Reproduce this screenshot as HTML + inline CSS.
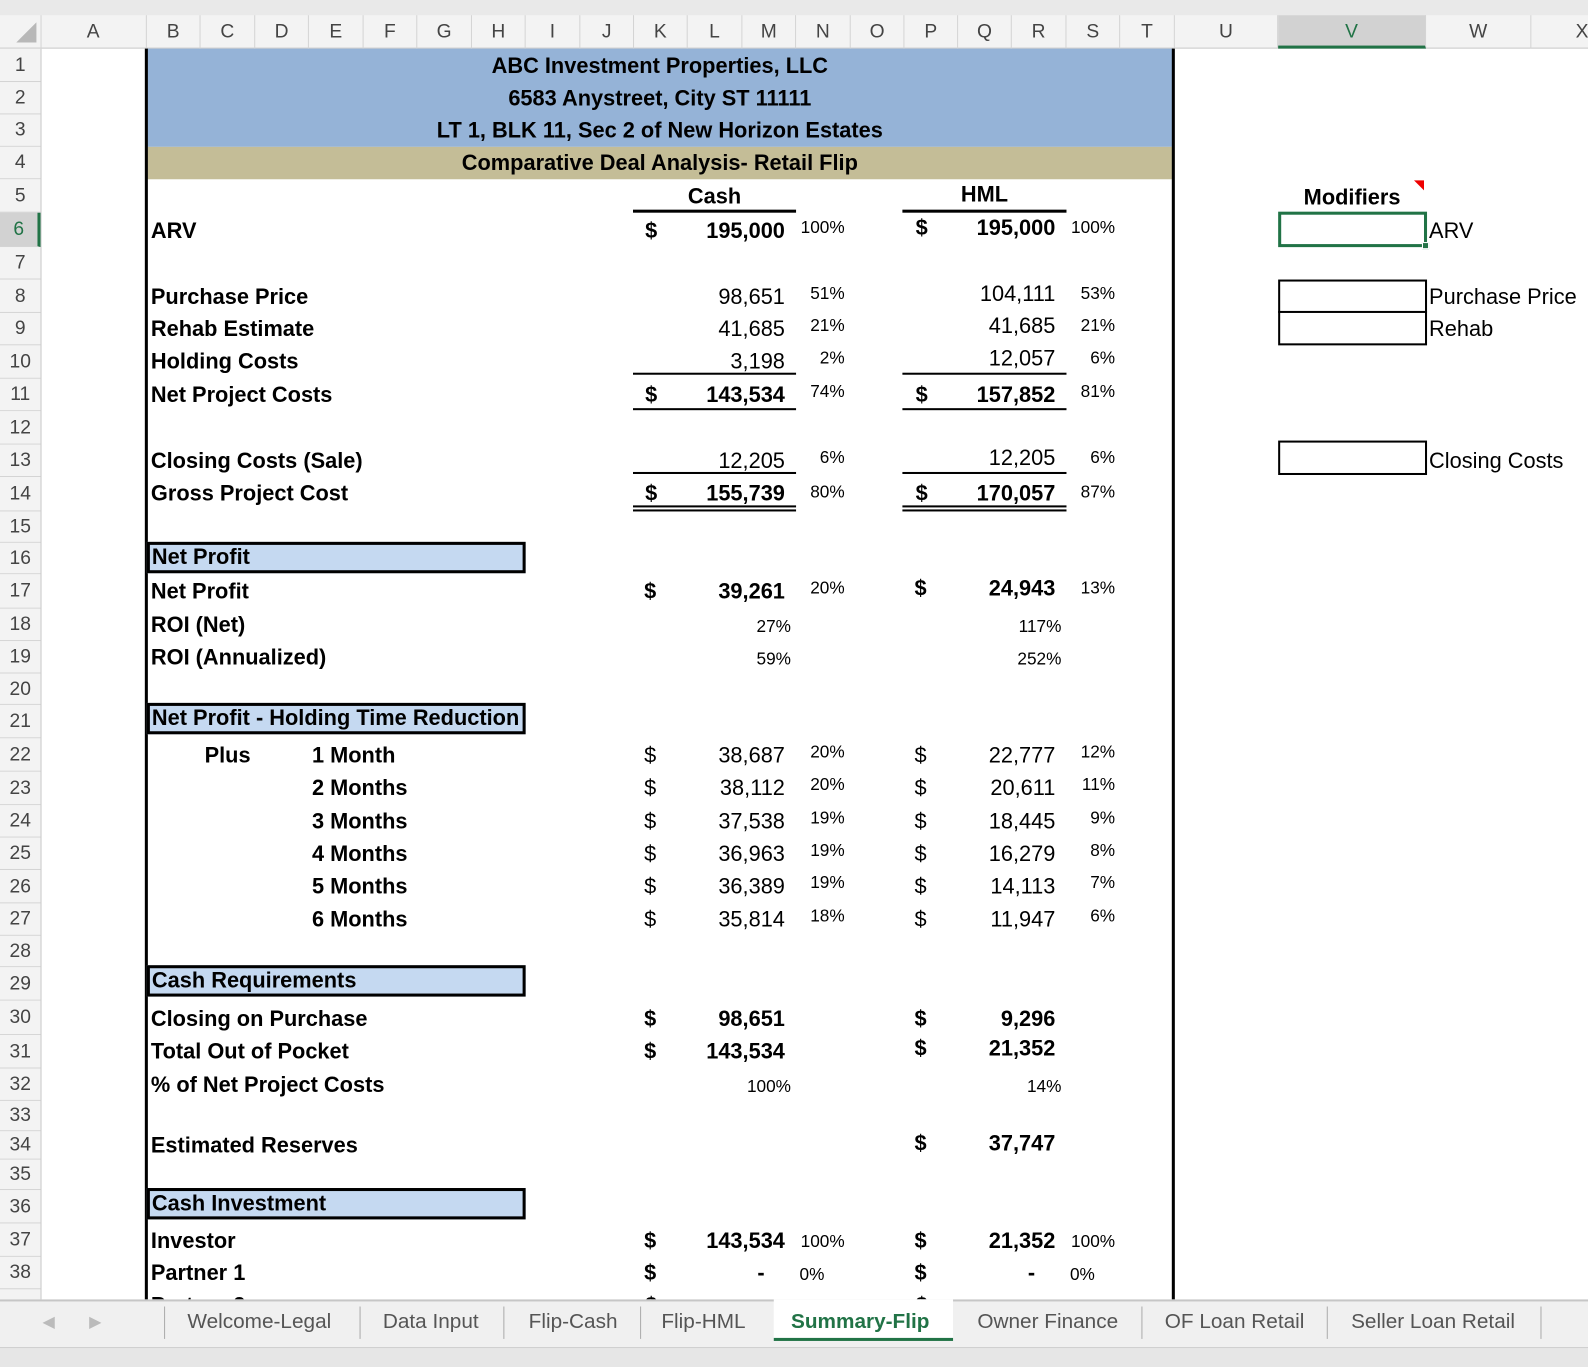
<!DOCTYPE html>
<html><head><meta charset="utf-8">
<style>
*{margin:0;padding:0;box-sizing:border-box}
body{width:1588px;height:1350px;position:relative;overflow:hidden;background:#fff;font-family:"Liberation Sans",Arial,sans-serif;color:#000}
#w{position:absolute;left:0;top:0;width:1568px;height:1334px;transform:scale(1.0128);transform-origin:0 0}
.a{position:absolute;white-space:nowrap}
.t{position:absolute;white-space:nowrap;font-size:21.5px;line-height:24px;height:24px}
.b{font-weight:bold}
.l{left:149px}
.r{text-align:right}
.p{font-size:17px}
.ch{position:absolute;top:15px;height:33px;line-height:33px;font-size:19px;color:#444;text-align:center;border-right:1px solid #d4d4d4}
.rh{position:absolute;left:0;width:40px;font-size:19px;color:#444;text-align:center;border-bottom:1px solid #d4d4d4;background:#f3f3f3}
.box{position:absolute;left:145px;width:374px;height:31px;background:#c5d9f1;border:3px solid #000;font-weight:bold;font-size:21.5px;line-height:25px;padding-left:2px}
.ul{position:absolute;height:2px;background:#000}
.tab{position:absolute;top:1292px;font-size:20.5px;color:#555;line-height:26px}
.sep{position:absolute;top:1290px;width:1px;height:32px;background:#aaa}
</style></head><body>
<div id="w">
<div class="a" style="left:0;top:0;width:1600px;height:48px;background:#f3f3f3;border-bottom:1px solid #c8c8c8"></div>
<div class="a" style="left:0;top:0;width:1600px;height:15px;background:#e9e9e9"></div>
<div class="a" style="left:40px;top:15px;width:0;height:33px;border-left:1px solid #d4d4d4"></div>
<svg class="a" style="left:16px;top:22px" width="20" height="20"><polygon points="20,0 20,20 0,20" fill="#b8b8b8"/></svg>
<div class="ch" style="left:40px;width:105px">A</div>
<div class="ch" style="left:145px;width:53px">B</div>
<div class="ch" style="left:198px;width:54px">C</div>
<div class="ch" style="left:252px;width:53px">D</div>
<div class="ch" style="left:305px;width:54px">E</div>
<div class="ch" style="left:359px;width:53px">F</div>
<div class="ch" style="left:412px;width:54px">G</div>
<div class="ch" style="left:466px;width:53px">H</div>
<div class="ch" style="left:519px;width:54px">I</div>
<div class="ch" style="left:573px;width:53px">J</div>
<div class="ch" style="left:626px;width:53px">K</div>
<div class="ch" style="left:679px;width:54px">L</div>
<div class="ch" style="left:733px;width:53px">M</div>
<div class="ch" style="left:786px;width:54px">N</div>
<div class="ch" style="left:840px;width:53px">O</div>
<div class="ch" style="left:893px;width:53px">P</div>
<div class="ch" style="left:946px;width:53px">Q</div>
<div class="ch" style="left:999px;width:54px">R</div>
<div class="ch" style="left:1053px;width:53px">S</div>
<div class="ch" style="left:1106px;width:54px">T</div>
<div class="ch" style="left:1160px;width:102px">U</div>
<div class="ch" style="left:1262px;width:146px;background:#d2d2d2;border-bottom:3px solid #217346;color:#217346">V</div>
<div class="ch" style="left:1408px;width:104px">W</div>
<div class="ch" style="left:1512px;width:100px;border:none">X</div>

<div class="a" style="left:0;top:48px;width:41px;height:1235px;background:#f3f3f3;border-right:1px solid #c8c8c8"></div>
<div class="rh" style="top:48px;height:33px;line-height:33px">1</div>
<div class="rh" style="top:81px;height:32px;line-height:32px">2</div>
<div class="rh" style="top:113px;height:32px;line-height:32px">3</div>
<div class="rh" style="top:145px;height:32px;line-height:32px">4</div>
<div class="rh" style="top:177px;height:33px;line-height:33px">5</div>
<div class="rh" style="top:210px;height:34px;line-height:34px;background:#d2d2d2;color:#217346;border-right:3px solid #217346">6</div>
<div class="rh" style="top:244px;height:32px;line-height:32px">7</div>
<div class="rh" style="top:276px;height:33px;line-height:33px">8</div>
<div class="rh" style="top:309px;height:32px;line-height:32px">9</div>
<div class="rh" style="top:341px;height:33px;line-height:33px">10</div>
<div class="rh" style="top:374px;height:32px;line-height:32px">11</div>
<div class="rh" style="top:406px;height:33px;line-height:33px">12</div>
<div class="rh" style="top:439px;height:32px;line-height:32px">13</div>
<div class="rh" style="top:471px;height:34px;line-height:34px">14</div>
<div class="rh" style="top:505px;height:31px;line-height:31px">15</div>
<div class="rh" style="top:536px;height:31px;line-height:31px">16</div>
<div class="rh" style="top:567px;height:34px;line-height:34px">17</div>
<div class="rh" style="top:601px;height:32px;line-height:32px">18</div>
<div class="rh" style="top:633px;height:32px;line-height:32px">19</div>
<div class="rh" style="top:665px;height:31px;line-height:31px">20</div>
<div class="rh" style="top:696px;height:33px;line-height:33px">21</div>
<div class="rh" style="top:729px;height:33px;line-height:33px">22</div>
<div class="rh" style="top:762px;height:33px;line-height:33px">23</div>
<div class="rh" style="top:795px;height:32px;line-height:32px">24</div>
<div class="rh" style="top:827px;height:32px;line-height:32px">25</div>
<div class="rh" style="top:859px;height:33px;line-height:33px">26</div>
<div class="rh" style="top:892px;height:32px;line-height:32px">27</div>
<div class="rh" style="top:924px;height:31px;line-height:31px">28</div>
<div class="rh" style="top:955px;height:33px;line-height:33px">29</div>
<div class="rh" style="top:988px;height:34px;line-height:34px">30</div>
<div class="rh" style="top:1022px;height:33px;line-height:33px">31</div>
<div class="rh" style="top:1055px;height:32px;line-height:32px">32</div>
<div class="rh" style="top:1087px;height:30px;line-height:30px">33</div>
<div class="rh" style="top:1117px;height:28px;line-height:28px">34</div>
<div class="rh" style="top:1145px;height:30px;line-height:30px">35</div>
<div class="rh" style="top:1175px;height:33px;line-height:33px">36</div>
<div class="rh" style="top:1208px;height:33px;line-height:33px">37</div>
<div class="rh" style="top:1241px;height:32px;line-height:32px">38</div>

<div class="a" style="left:145px;top:48px;width:1013px;height:97px;background:#95b3d7"></div>
<div class="a" style="left:145px;top:145px;width:1013px;height:32px;background:#c4bd97"></div>
<div class="t b" style="left:145px;width:1013px;text-align:center;top:53px">ABC Investment Properties, LLC</div>
<div class="t b" style="left:145px;width:1013px;text-align:center;top:85px">6583 Anystreet, City ST 11111</div>
<div class="t b" style="left:145px;width:1013px;text-align:center;top:117px">LT 1, BLK 11, Sec 2 of New Horizon Estates</div>
<div class="t b" style="left:145px;width:1013px;text-align:center;top:149px">Comparative Deal Analysis- Retail Flip</div>
<div class="a" style="left:143px;top:48px;width:3px;height:1235px;background:#000"></div>
<div class="a" style="left:1157px;top:48px;width:3px;height:1235px;background:#000"></div>

<div class="t b" style="left:625px;width:161px;text-align:center;top:182px">Cash</div>
<div class="t b" style="left:891px;width:162px;text-align:center;top:180px">HML</div>
<div class="ul" style="left:625px;width:161px;top:207px;height:3px"></div>
<div class="ul" style="left:891px;width:162px;top:207px;height:3px"></div>

<div class="t b l" style="top:216px">ARV</div>
<div class="t b l" style="top:281px">Purchase Price</div>
<div class="t b l" style="top:313px">Rehab Estimate</div>
<div class="t b l" style="top:345px">Holding Costs</div>
<div class="t b l" style="top:378px">Net Project Costs</div>
<div class="t b l" style="top:443px">Closing Costs (Sale)</div>
<div class="t b l" style="top:475px">Gross Project Cost</div>
<div class="box" style="top:535px">Net Profit</div>
<div class="t b l" style="top:572px">Net Profit</div>
<div class="t b l" style="top:605px">ROI (Net)</div>
<div class="t b l" style="top:637px">ROI (Annualized)</div>
<div class="box" style="top:694px">Net Profit - Holding Time Reduction</div>
<div class="t b" style="left:202px;top:734px">Plus</div>
<div class="t b" style="left:308px;top:734px">1 Month</div>
<div class="t b" style="left:308px;top:766px">2 Months</div>
<div class="t b" style="left:308px;top:799px">3 Months</div>
<div class="t b" style="left:308px;top:831px">4 Months</div>
<div class="t b" style="left:308px;top:863px">5 Months</div>
<div class="t b" style="left:308px;top:896px">6 Months</div>
<div class="box" style="top:953px">Cash Requirements</div>
<div class="t b l" style="top:994px">Closing on Purchase</div>
<div class="t b l" style="top:1026px">Total Out of Pocket</div>
<div class="t b l" style="top:1059px">% of Net Project Costs</div>
<div class="t b l" style="top:1119px">Estimated Reserves</div>
<div class="box" style="top:1173px">Cash Investment</div>
<div class="t b l" style="top:1213px">Investor</div>
<div class="t b l" style="top:1245px">Partner 1</div>
<div class="a" style="left:146px;top:1272px;width:1011px;height:11px;overflow:hidden"><div class="t b" style="left:3px;top:5px">Partner 2</div><div class="t b" style="left:491px;top:5px">$</div><div class="t b" style="left:758px;top:5px">$</div></div>

<div class="t b" style="left:637px;top:216px">$</div>
<div class="t b r" style="left:575px;width:200px;top:216px">195,000</div>
<div class="t p r" style="left:734px;width:100px;top:213px">100%</div>
<div class="t r" style="left:575px;width:200px;top:281px">98,651</div>
<div class="t p r" style="left:734px;width:100px;top:278px">51%</div>
<div class="t r" style="left:575px;width:200px;top:313px">41,685</div>
<div class="t p r" style="left:734px;width:100px;top:310px">21%</div>
<div class="t r" style="left:575px;width:200px;top:345px">3,198</div>
<div class="t p r" style="left:734px;width:100px;top:342px">2%</div>
<div class="ul" style="left:625px;width:161px;top:368px"></div>
<div class="t b" style="left:637px;top:378px">$</div>
<div class="t b r" style="left:575px;width:200px;top:378px">143,534</div>
<div class="t p r" style="left:734px;width:100px;top:375px">74%</div>
<div class="ul" style="left:625px;width:161px;top:403px"></div>
<div class="t r" style="left:575px;width:200px;top:443px">12,205</div>
<div class="t p r" style="left:734px;width:100px;top:440px">6%</div>
<div class="ul" style="left:625px;width:161px;top:466px"></div>
<div class="t b" style="left:637px;top:475px">$</div>
<div class="t b r" style="left:575px;width:200px;top:475px">155,739</div>
<div class="t p r" style="left:734px;width:100px;top:474px">80%</div>
<div class="ul" style="left:625px;width:161px;top:499px"></div>
<div class="ul" style="left:625px;width:161px;top:503px"></div>
<div class="t b" style="left:636px;top:572px">$</div>
<div class="t b r" style="left:575px;width:200px;top:572px">39,261</div>
<div class="t p r" style="left:734px;width:100px;top:569px">20%</div>
<div class="t p r" style="left:681px;width:100px;top:607px">27%</div>
<div class="t p r" style="left:681px;width:100px;top:639px">59%</div>
<div class="t" style="left:636px;top:734px">$</div><div class="t r" style="left:575px;width:200px;top:734px">38,687</div><div class="t p r" style="left:734px;width:100px;top:731px">20%</div>
<div class="t" style="left:636px;top:766px">$</div><div class="t r" style="left:575px;width:200px;top:766px">38,112</div><div class="t p r" style="left:734px;width:100px;top:763px">20%</div>
<div class="t" style="left:636px;top:799px">$</div><div class="t r" style="left:575px;width:200px;top:799px">37,538</div><div class="t p r" style="left:734px;width:100px;top:796px">19%</div>
<div class="t" style="left:636px;top:831px">$</div><div class="t r" style="left:575px;width:200px;top:831px">36,963</div><div class="t p r" style="left:734px;width:100px;top:828px">19%</div>
<div class="t" style="left:636px;top:863px">$</div><div class="t r" style="left:575px;width:200px;top:863px">36,389</div><div class="t p r" style="left:734px;width:100px;top:860px">19%</div>
<div class="t" style="left:636px;top:896px">$</div><div class="t r" style="left:575px;width:200px;top:896px">35,814</div><div class="t p r" style="left:734px;width:100px;top:893px">18%</div>
<div class="t b" style="left:636px;top:994px">$</div><div class="t b r" style="left:575px;width:200px;top:994px">98,651</div>
<div class="t b" style="left:636px;top:1026px">$</div><div class="t b r" style="left:575px;width:200px;top:1026px">143,534</div>
<div class="t p r" style="left:681px;width:100px;top:1061px">100%</div>
<div class="t b" style="left:636px;top:1213px">$</div><div class="t b r" style="left:575px;width:200px;top:1213px">143,534</div><div class="t p r" style="left:734px;width:100px;top:1214px">100%</div>
<div class="t b" style="left:636px;top:1245px">$</div><div class="t b r" style="left:575px;width:180px;top:1245px">-</div><div class="t p r" style="left:714px;width:100px;top:1247px">0%</div>

<div class="t b" style="left:904px;top:213px">$</div>
<div class="t b r" style="left:842px;width:200px;top:213px">195,000</div>
<div class="t p r" style="left:1001px;width:100px;top:213px">100%</div>
<div class="t r" style="left:842px;width:200px;top:278px">104,111</div>
<div class="t p r" style="left:1001px;width:100px;top:278px">53%</div>
<div class="t r" style="left:842px;width:200px;top:310px">41,685</div>
<div class="t p r" style="left:1001px;width:100px;top:310px">21%</div>
<div class="t r" style="left:842px;width:200px;top:342px">12,057</div>
<div class="t p r" style="left:1001px;width:100px;top:342px">6%</div>
<div class="ul" style="left:891px;width:162px;top:368px"></div>
<div class="t b" style="left:904px;top:378px">$</div>
<div class="t b r" style="left:842px;width:200px;top:378px">157,852</div>
<div class="t p r" style="left:1001px;width:100px;top:375px">81%</div>
<div class="ul" style="left:891px;width:162px;top:403px"></div>
<div class="t r" style="left:842px;width:200px;top:440px">12,205</div>
<div class="t p r" style="left:1001px;width:100px;top:440px">6%</div>
<div class="ul" style="left:891px;width:162px;top:466px"></div>
<div class="t b" style="left:904px;top:475px">$</div>
<div class="t b r" style="left:842px;width:200px;top:475px">170,057</div>
<div class="t p r" style="left:1001px;width:100px;top:474px">87%</div>
<div class="ul" style="left:891px;width:162px;top:499px"></div>
<div class="ul" style="left:891px;width:162px;top:503px"></div>
<div class="t b" style="left:903px;top:569px">$</div>
<div class="t b r" style="left:842px;width:200px;top:569px">24,943</div>
<div class="t p r" style="left:1001px;width:100px;top:569px">13%</div>
<div class="t p r" style="left:948px;width:100px;top:607px">117%</div>
<div class="t p r" style="left:948px;width:100px;top:639px">252%</div>
<div class="t" style="left:903px;top:734px">$</div><div class="t r" style="left:842px;width:200px;top:734px">22,777</div><div class="t p r" style="left:1001px;width:100px;top:731px">12%</div>
<div class="t" style="left:903px;top:766px">$</div><div class="t r" style="left:842px;width:200px;top:766px">20,611</div><div class="t p r" style="left:1001px;width:100px;top:763px">11%</div>
<div class="t" style="left:903px;top:799px">$</div><div class="t r" style="left:842px;width:200px;top:799px">18,445</div><div class="t p r" style="left:1001px;width:100px;top:796px">9%</div>
<div class="t" style="left:903px;top:831px">$</div><div class="t r" style="left:842px;width:200px;top:831px">16,279</div><div class="t p r" style="left:1001px;width:100px;top:828px">8%</div>
<div class="t" style="left:903px;top:863px">$</div><div class="t r" style="left:842px;width:200px;top:863px">14,113</div><div class="t p r" style="left:1001px;width:100px;top:860px">7%</div>
<div class="t" style="left:903px;top:896px">$</div><div class="t r" style="left:842px;width:200px;top:896px">11,947</div><div class="t p r" style="left:1001px;width:100px;top:893px">6%</div>
<div class="t b" style="left:903px;top:994px">$</div><div class="t b r" style="left:842px;width:200px;top:994px">9,296</div>
<div class="t b" style="left:903px;top:1023px">$</div><div class="t b r" style="left:842px;width:200px;top:1023px">21,352</div>
<div class="t p r" style="left:948px;width:100px;top:1061px">14%</div>
<div class="t b" style="left:903px;top:1117px">$</div><div class="t b r" style="left:842px;width:200px;top:1117px">37,747</div>
<div class="t b" style="left:903px;top:1213px">$</div><div class="t b r" style="left:842px;width:200px;top:1213px">21,352</div><div class="t p r" style="left:1001px;width:100px;top:1214px">100%</div>
<div class="t b" style="left:903px;top:1245px">$</div><div class="t b r" style="left:842px;width:180px;top:1245px">-</div><div class="t p r" style="left:981px;width:100px;top:1247px">0%</div>

<div class="t b" style="left:1262px;width:146px;text-align:center;top:183px">Modifiers</div>
<svg class="a" style="left:1396px;top:178px" width="12" height="12"><polygon points="0,0 10,0 10,10" fill="#e00"/></svg>
<div class="a" style="left:1262px;top:209px;width:147px;height:35px;border:3px solid #217346"></div>
<div class="a" style="left:1404px;top:239px;width:7px;height:7px;background:#217346;border:1px solid #fff"></div>
<div class="t" style="left:1411px;top:216px">ARV</div>
<div class="a" style="left:1262px;top:276px;width:147px;height:65px;border:2px solid #000"></div>
<div class="a" style="left:1262px;top:307px;width:147px;height:2px;background:#000"></div>
<div class="t" style="left:1411px;top:281px">Purchase Price</div>
<div class="t" style="left:1411px;top:313px">Rehab</div>
<div class="a" style="left:1262px;top:435px;width:147px;height:34px;border:2px solid #000"></div>
<div class="t" style="left:1411px;top:443px">Closing Costs</div>

<div class="a" style="left:0;top:1283px;width:1600px;height:67px;background:#f0f0f0;border-top:2px solid #c6c6c6"></div>
<div class="a" style="left:0;top:1330px;width:1600px;height:20px;background:#e6e6e6;border-top:1px solid #d0d0d0"></div>
<div class="a" style="left:42px;top:1295px;font-size:16px;color:#bbb">&#9664;</div>
<div class="a" style="left:88px;top:1295px;font-size:16px;color:#bbb">&#9654;</div>
<div class="sep" style="left:162px"></div>
<div class="tab" style="left:185px">Welcome-Legal</div>
<div class="sep" style="left:355px"></div>
<div class="tab" style="left:378px">Data Input</div>
<div class="sep" style="left:497px"></div>
<div class="tab" style="left:522px">Flip-Cash</div>
<div class="sep" style="left:632px"></div>
<div class="tab" style="left:653px">Flip-HML</div>
<div class="a" style="left:764px;top:1283px;width:177px;height:41px;background:#fff;border-bottom:3px solid #217346"></div>
<div class="tab" style="left:781px;color:#217346;font-weight:bold">Summary-Flip</div>
<div class="tab" style="left:965px">Owner Finance</div>
<div class="sep" style="left:1127px"></div>
<div class="tab" style="left:1150px">OF Loan Retail</div>
<div class="sep" style="left:1310px"></div>
<div class="tab" style="left:1334px">Seller Loan Retail</div>
<div class="sep" style="left:1521px"></div>
</div>
</body></html>
